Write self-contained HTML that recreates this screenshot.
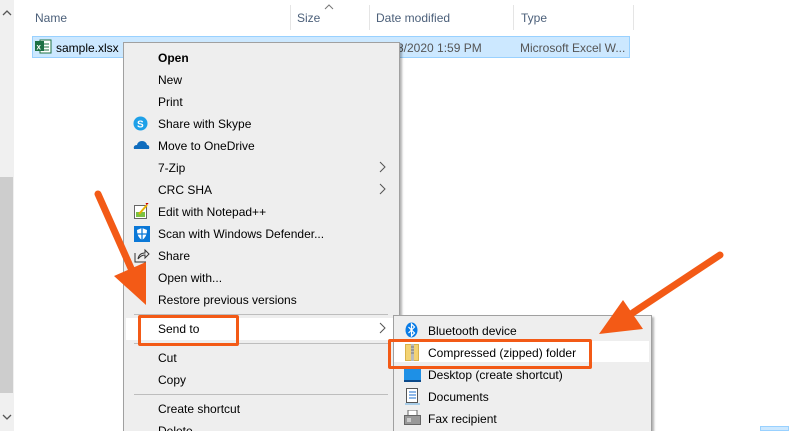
<!DOCTYPE html>
<html><head><meta charset="utf-8"><style>
*{margin:0;padding:0;box-sizing:border-box}
html,body{width:789px;height:431px;overflow:hidden}
body{background:#fff;position:relative;font-family:"Liberation Sans",sans-serif;font-size:12px;color:#000}
.a{position:absolute}
.hd{color:#4c607a;top:11px}
.vs{position:absolute;top:5px;width:1px;height:25px;background:#e5e5e5}
.mi{position:absolute;left:158px;height:22px;line-height:22px;white-space:nowrap}
.si{position:absolute;left:428px;height:22px;line-height:22px;white-space:nowrap}
.sep{position:absolute;height:1px;background:#bdbdbd}
</style></head><body>
<div class="a" style="left:0;top:0;width:14px;height:431px;background:#f0f0f0"></div>
<div class="a" style="left:0;top:177px;width:13px;height:216px;background:#cdcdcd"></div>
<svg class="a" style="left:2px;top:9px" width="10" height="8"><path d="M1 6 L5 2 L9 6" stroke="#555" fill="none" stroke-width="1.3"/></svg>
<svg class="a" style="left:2px;top:413px" width="10" height="8"><path d="M1 2 L5 6 L9 2" stroke="#555" fill="none" stroke-width="1.3"/></svg>
<div class="a hd" style="left:35px">Name</div>
<div class="vs" style="left:290px"></div>
<div class="a hd" style="left:297px">Size</div>
<svg class="a" style="left:324px;top:4px" width="10" height="6"><path d="M1 5 L5 1 L9 5" stroke="#777" fill="none"/></svg>
<div class="vs" style="left:369px"></div>
<div class="a hd" style="left:376px">Date modified</div>
<div class="vs" style="left:513px"></div>
<div class="a hd" style="left:521px">Type</div>
<div class="vs" style="left:633px"></div>
<div class="a" style="left:32px;top:36px;width:598px;height:22px;background:#cce8ff;border:1px solid #99d1ff"></div>
<svg class="a" style="left:35px;top:39px" width="17" height="15"><rect x="5" y="1" width="11" height="13" fill="#fff" stroke="#217346"/><path d="M9 5h5M9 8h5M9 11h5" stroke="#217346"/><rect x="0" y="2" width="9" height="10" fill="#1d7044"/><text x="1.5" y="10.5" font-size="8" fill="#fff" font-family="Liberation Sans" font-weight="bold">x</text></svg>
<div class="a" style="left:56px;top:41px">sample.xlsx</div>
<div class="a" style="left:397px;top:41px;color:#555">8/2020 1:59 PM</div>
<div class="a" style="left:520px;top:41px;color:#555">Microsoft Excel W...</div>
<div class="a" style="left:123px;top:42px;width:277px;height:400px;background:#eeeeee;border:1px solid #a0a0a0;box-shadow:2px 2px 2px rgba(0,0,0,.3)"></div>
<div class="mi" style="top:47px;font-weight:bold">Open</div>
<div class="mi" style="top:69px">New</div>
<div class="mi" style="top:91px">Print</div>
<svg class="a" style="left:133px;top:116px" width="15" height="15"><circle cx="7.5" cy="7.5" r="7" fill="#1ea0e8"/><text x="4" y="11.5" font-size="10" fill="#fff" font-weight="bold" font-family="Liberation Sans">S</text></svg>
<div class="mi" style="top:113px">Share with Skype</div>
<svg class="a" style="left:133px;top:140px" width="17" height="10"><path d="M1 9 Q0 5 4 5 Q5 1 9 1 Q13 1 14 5 Q17 5 16 9 Z" fill="#0f6cbd"/></svg>
<div class="mi" style="top:135px">Move to OneDrive</div>
<div class="mi" style="top:157px">7-Zip</div>
<svg class="a" style="left:379px;top:161px" width="8" height="12"><path d="M1 1 L6 6 L1 11" stroke="#555" fill="none"/></svg>
<div class="mi" style="top:179px">CRC SHA</div>
<svg class="a" style="left:379px;top:183px" width="8" height="12"><path d="M1 1 L6 6 L1 11" stroke="#555" fill="none"/></svg>
<svg class="a" style="left:134px;top:203px" width="15" height="16"><rect x="0.5" y="2.5" width="12" height="13" fill="#fff" stroke="#666"/><rect x="2" y="9" width="9" height="5" fill="#7cc242"/><path d="M5 11 L13 2" stroke="#e8b100" stroke-width="2"/><path d="M12 1 L14 0" stroke="#c00" stroke-width="2"/></svg>
<div class="mi" style="top:201px">Edit with Notepad++</div>
<svg class="a" style="left:134px;top:226px" width="16" height="16"><rect width="16" height="16" fill="#0a78d7"/><path d="M8 2 L13 4 Q13 11 8 14 Q3 11 3 4 Z" fill="#fff"/><path d="M8 2V14M3 8H13" stroke="#0a78d7" stroke-width="1.3"/></svg>
<div class="mi" style="top:223px">Scan with Windows Defender...</div>
<svg class="a" style="left:134px;top:248px" width="16" height="15"><path d="M1 5 V14 H12" stroke="#333" fill="none"/><path d="M4 11 Q5 5 11 5 V2 L15 6 L11 10 V7 Q7 7 4 11 Z" stroke="#333" fill="none"/></svg>
<div class="mi" style="top:245px">Share</div>
<div class="mi" style="top:267px">Open with...</div>
<div class="mi" style="top:289px">Restore previous versions</div>
<div class="sep" style="left:134px;top:314px;width:254px"></div>
<div class="a" style="left:126px;top:318px;width:270px;height:22px;background:#fff"></div>
<div class="mi" style="top:318px">Send to</div>
<svg class="a" style="left:379px;top:322px" width="8" height="12"><path d="M1 1 L6 6 L1 11" stroke="#555" fill="none"/></svg>
<div class="sep" style="left:134px;top:343px;width:254px"></div>
<div class="mi" style="top:347px">Cut</div>
<div class="mi" style="top:369px">Copy</div>
<div class="sep" style="left:134px;top:394px;width:254px"></div>
<div class="mi" style="top:398px">Create shortcut</div>
<div class="mi" style="top:420px">Delete</div>
<div class="a" style="left:393px;top:315px;width:259px;height:130px;background:#eeeeee;border:1px solid #a0a0a0;box-shadow:2px 2px 2px rgba(0,0,0,.3)"></div>
<svg class="a" style="left:405px;top:322px" width="13" height="16"><ellipse cx="6.5" cy="8" rx="6" ry="7.5" fill="#0a7ce6"/><path d="M3.5 5 L9.5 11 L6.5 14 V2 L9.5 5 L3.5 11" stroke="#fff" fill="none" stroke-width="1.2"/></svg>
<div class="si" style="top:320px">Bluetooth device</div>
<div class="a" style="left:394px;top:341px;width:255px;height:21px;background:#fff"></div>
<svg class="a" style="left:405px;top:344px" width="14" height="17"><rect x="0.5" y="0.5" width="13" height="16" fill="#f3d373" stroke="#d9b24a"/><rect x="6" y="0" width="3" height="17" fill="#bbb"/><path d="M6 3h3M6 6h3M6 9h3" stroke="#777"/></svg>
<div class="si" style="top:342px">Compressed (zipped) folder</div>
<svg class="a" style="left:404px;top:368px" width="17" height="14"><rect x="0" y="0" width="17" height="13" fill="#1e90e6"/><rect x="0" y="12" width="17" height="2" fill="#0b4a8a"/></svg>
<div class="si" style="top:364px">Desktop (create shortcut)</div>
<svg class="a" style="left:405px;top:388px" width="15" height="17"><rect x="1.5" y="0.5" width="11" height="14" fill="#fff" stroke="#555"/><path d="M4 4h7M4 7h7M4 10h7" stroke="#1e6fd0"/><rect x="0" y="15" width="15" height="2" fill="#a8cde8"/></svg>
<div class="si" style="top:386px">Documents</div>
<svg class="a" style="left:404px;top:410px" width="17" height="16"><rect x="4" y="0" width="9" height="6" fill="#fff" stroke="#666"/><rect x="0.5" y="5.5" width="16" height="9" fill="#999" stroke="#666"/><path d="M3 9h4M3 11h4" stroke="#fff"/></svg>
<div class="si" style="top:408px">Fax recipient</div>
<div class="a" style="left:138px;top:315px;width:101px;height:31px;border:3px solid #f35a16;border-radius:2px"></div>
<div class="a" style="left:388px;top:339px;width:204px;height:30px;border:3px solid #f35a16;border-radius:2px"></div>
<svg class="a" style="left:0;top:0" width="789" height="431">
<path d="M98 194 L134 275" stroke="#f35a16" stroke-width="7" stroke-linecap="round"/>
<polygon points="114,276 146,262 146,305" fill="#f35a16"/>
<path d="M720 255 L628 316" stroke="#f35a16" stroke-width="7" stroke-linecap="round"/>
<polygon points="623,300 643,329 599,334" fill="#f35a16"/>
</svg>
<div class="a" style="left:760px;top:426px;width:29px;height:5px;background:#cce8ff;border:1px solid #99d1ff"></div>
</body></html>
